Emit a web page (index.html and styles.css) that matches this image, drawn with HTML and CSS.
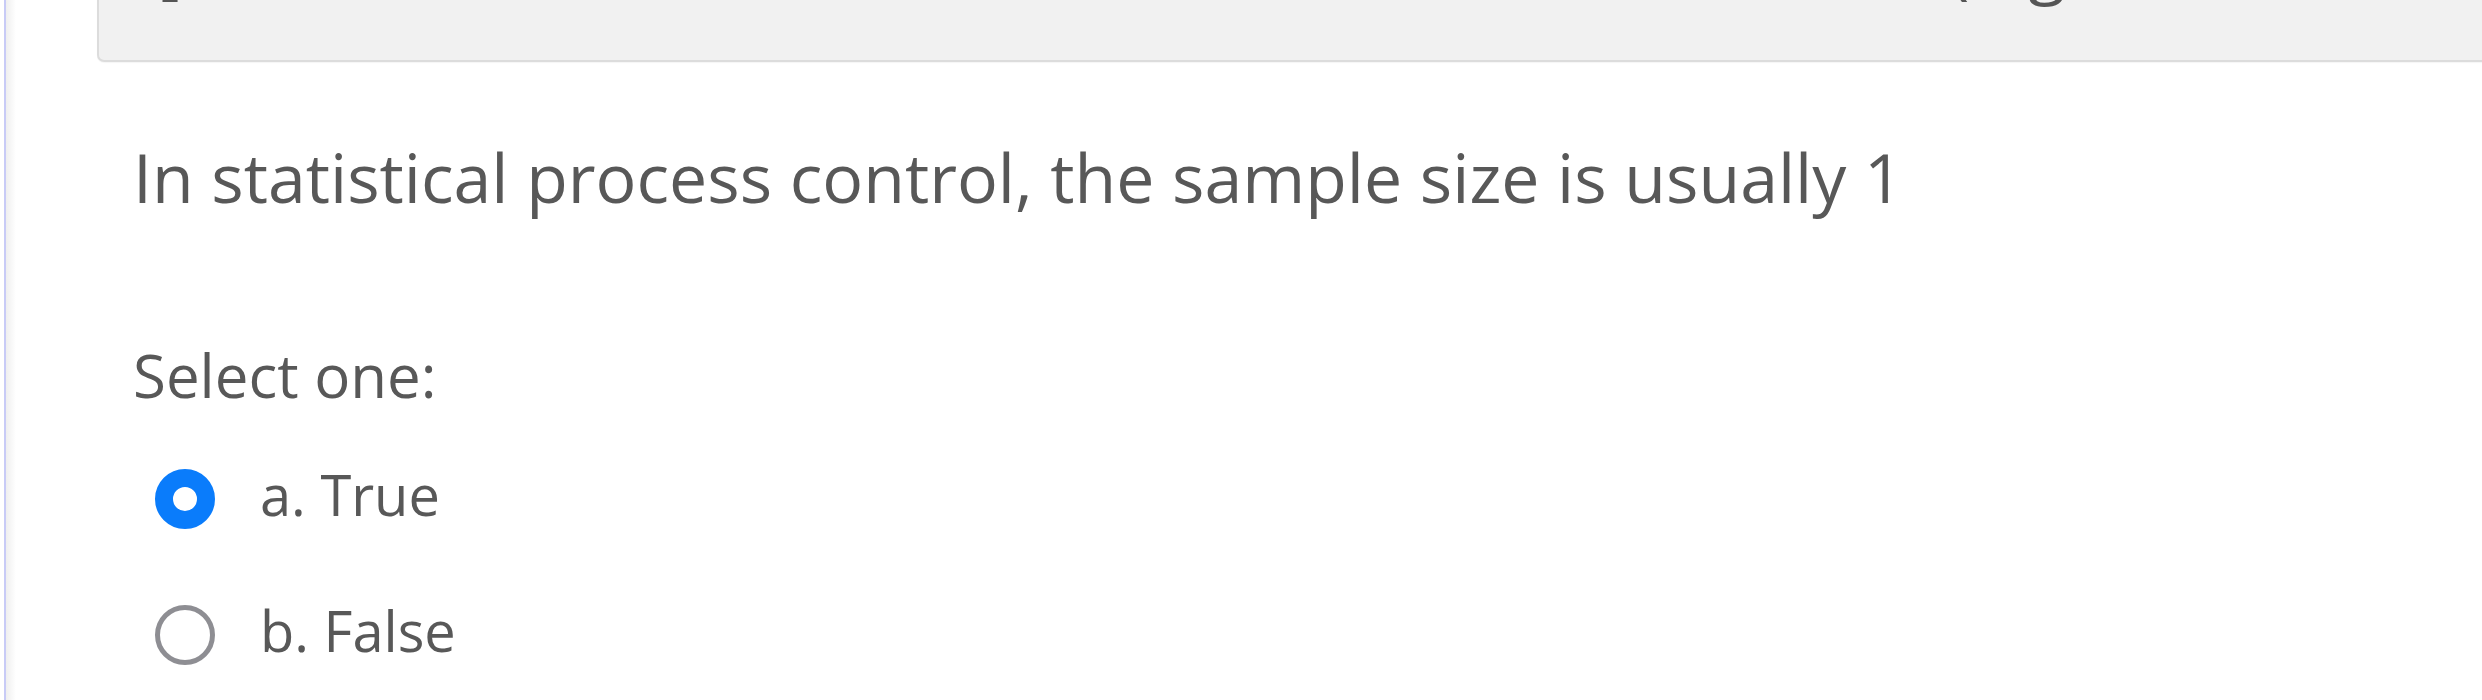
FILE: index.html
```html
<!DOCTYPE html>
<html lang="en">
<head>
<meta charset="utf-8">
<title>Question</title>
<link rel="stylesheet" href="styles.css">
</head>
<body>
<div class="page">
  <div class="rail"></div>
  <main class="content">
    <div class="info">
      <div class="info-line">
        <span class="info-left">[</span>
        <span class="info-right">(ing,</span>
      </div>
    </div>
    <div class="question">
      <p class="qtext">In statistical process control, the sample size is usually 1</p>
      <p class="prompt">Select one:</p>
      <div class="answers">
        <label class="option">
          <span class="radio radio-checked"></span>
          <span class="label">a. True</span>
        </label>
        <label class="option">
          <span class="radio"></span>
          <span class="label">b. False</span>
        </label>
      </div>
    </div>
  </main>
</div>
</body>
</html>
```

FILE: styles.css
```css
html, body {
  margin: 0;
  padding: 0;
  background: #ffffff;
}

body {
  font-family: "Open Sans", "Noto Sans", sans-serif;
  color: #585858;
  overflow: hidden;
  width: 2482px;
  height: 700px;
}

.page {
  display: flex;
  height: 700px;
}

.rail {
  flex: 0 0 16px;
  background: linear-gradient(to right, #ffffff 0, #ffffff 4px, #c8cbf6 4px, #c8cbf6 6px, #efefef 6px, #ffffff 16px);
}

.content {
  flex: 1;
  padding-left: 81px;
  min-width: 0;
}

.info {
  margin-top: -80px;
  height: 138px;
  margin-right: -40px;
  background: #f1f1f1;
  border: 2px solid #dcdcdc;
  border-radius: 7px;
  box-shadow: 0 1px 1px rgba(0, 0, 0, 0.04);
}

.info-line {
  display: flex;
  font-size: 68px;
  line-height: 68px;
  color: #555;
  margin-top: 9px;
}

.info-left {
  margin-left: 58px;
}

.info-right {
  margin-left: 1770px;
}

.question {
  padding-left: 36px;
}

.qtext {
  margin: 64px 0 0;
  font-size: 68px;
  line-height: 102px;
}

.prompt {
  margin: 102px 0 0;
  font-size: 60px;
  line-height: 90px;
}

.answers {
  display: flex;
  flex-direction: column;
  gap: 76px;
  margin-top: 49px;
  padding-left: 22px;
}

.option {
  display: flex;
  align-items: center;
  gap: 45px;
  height: 60px;
}

.radio {
  box-sizing: border-box;
  width: 60px;
  height: 60px;
  border-radius: 50%;
  border: 5px solid #8e8e93;
  background: #ffffff;
  flex: 0 0 60px;
}

.radio-checked {
  border: 18px solid #0a7cfb;
}

.label {
  font-size: 56px;
  line-height: 84px;
  margin-bottom: 10px;
}
```
